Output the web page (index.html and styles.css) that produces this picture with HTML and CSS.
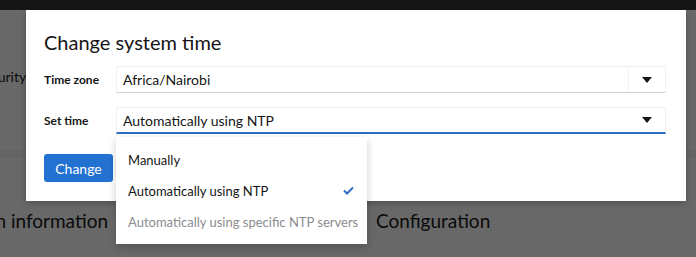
FILE: index.html
```html
<!DOCTYPE html>
<html>
<head>
<meta charset="utf-8">
<link rel="stylesheet" href="styles.css">
</head>
<body>
<div class="page">
  <div class="masthead"></div>
  <div class="content">
    <div class="card card-top">
      <div class="card-text">Security</div>
    </div>
    <div class="cards-row">
      <div class="card card-left"><h2 class="card-title">System information</h2></div>
      <div class="card card-right"><h2 class="card-title">Configuration</h2></div>
    </div>
  </div>
</div>
<div class="backdrop"></div>
<div class="modal">
  <h1 class="modal-title">Change system time</h1>
  <div class="form">
    <div class="form-row">
      <label class="form-label">Time zone</label>
      <div class="select">
        <span class="select-text">Africa/Nairobi</span>
        <span class="select-toggle"><svg width="10" height="6" viewBox="0 0 10 6"><path d="M0 0h10L5 6z" fill="#151515"/></svg></span>
      </div>
    </div>
    <div class="form-row">
      <label class="form-label">Set time</label>
      <div class="select select-open">
        <span class="select-text">Automatically using NTP</span>
        <span class="select-arrow"><svg width="10" height="6" viewBox="0 0 10 6"><path d="M0 0h10L5 6z" fill="#151515"/></svg></span>
      </div>
    </div>
  </div>
  <div class="modal-footer">
    <button class="btn-primary">Change</button>
  </div>
</div>
<ul class="menu">
  <li class="menu-item">Manually</li>
  <li class="menu-item">Automatically using NTP<svg class="check" width="11" height="9" viewBox="0 0 11 9"><path d="M1 4.5l3 3 6-6" fill="none" stroke="#2b6fc2" stroke-width="2"/></svg></li>
  <li class="menu-item disabled">Automatically using specific NTP servers</li>
</ul>
</body>
</html>
```
FILE: styles.css
```css
* { box-sizing: border-box; }
html, body { margin: 0; padding: 0; }
body {
  width: 696px;
  height: 257px;
  overflow: hidden;
  position: relative;
  font-family: Lato, "Open Sans", sans-serif;
  background: #f6f6f6;
}
.page { width: 696px; height: 257px; display: flex; flex-direction: column; overflow: hidden; }
.masthead { height: 10px; background: #151515; flex: none; }
.content { flex: 1; display: flex; flex-direction: column; gap: 8px; }
.card { background: #fff; }
.card-top { height: 140px; flex: none; display: flex; padding-top: 58px; }
.card-text { font-size: 14px; color: #151515; margin-left: -24px; }
.cards-row { display: flex; gap: 0; flex: 1; }
.card-left { width: 356px; flex: none; padding-top: 51px; }
.card-right { flex: 1; padding-top: 51px; padding-left: 20px; }
.card-title { margin: 0; font-weight: 400; font-size: 19px; line-height: 24px; color: #151515; white-space: nowrap; }
.card-left .card-title { margin-left: -54px; }
.backdrop {
  position: absolute; inset: 10px 0 0 0;
  background: rgba(3, 3, 3, 0.6);
}
.modal {
  position: absolute;
  left: 26px; top: 10px;
  width: 660px; height: 191px;
  background: #fff;
  padding: 18px 20px 19px 18px;
  box-shadow: 0 2px 6px rgba(0,0,0,0.25);
}
.modal-title {
  margin: 0;
  font-size: 20px;
  font-weight: 400;
  line-height: 28px;
  color: #151515;
}
.form { display: flex; flex-direction: column; gap: 14px; margin-top: 10px; }
.form-row { display: flex; align-items: center; }
.form-label { width: 72px; font-size: 12px; font-weight: 700; color: #151515; }
.select {
  flex: 1;
  height: 27px;
  display: flex;
  align-items: center;
  border: 1px solid #f0f0f0;
  border-bottom-color: #d2d2d2;
  font-size: 14px;
  color: #151515;
}
.select-text { flex: 1; padding-left: 6px; }
.select-toggle {
  width: 37px; height: 100%;
  display: flex; align-items: center; justify-content: center;
  border-left: 1px solid #f0f0f0;
}
.select-arrow { width: 37px; display: flex; justify-content: center; }
.select-open { border-bottom: 2px solid #2b6fc2; }
.modal-footer { margin-top: 20px; }
.btn-primary {
  font-family: inherit;
  font-size: 14px;
  color: #fff;
  background: #2371d1;
  border: 0;
  border-radius: 3px;
  width: 69px;
  height: 28px;
  padding: 0;
}
.menu {
  position: absolute;
  left: 116px; top: 137px;
  width: 251px;
  margin: 0; padding: 7px 0;
  list-style: none;
  background: #fff;
  box-shadow: 0 3px 8px rgba(0,0,0,0.2);
}
.menu-item {
  display: flex; align-items: center; justify-content: space-between;
  height: 31px;
  padding: 0 12px;
  font-size: 13px;
  color: #151515;
  white-space: nowrap;
}
.menu-item.disabled { color: #8a8d90; }
.check { margin-right: 1px; }
```
